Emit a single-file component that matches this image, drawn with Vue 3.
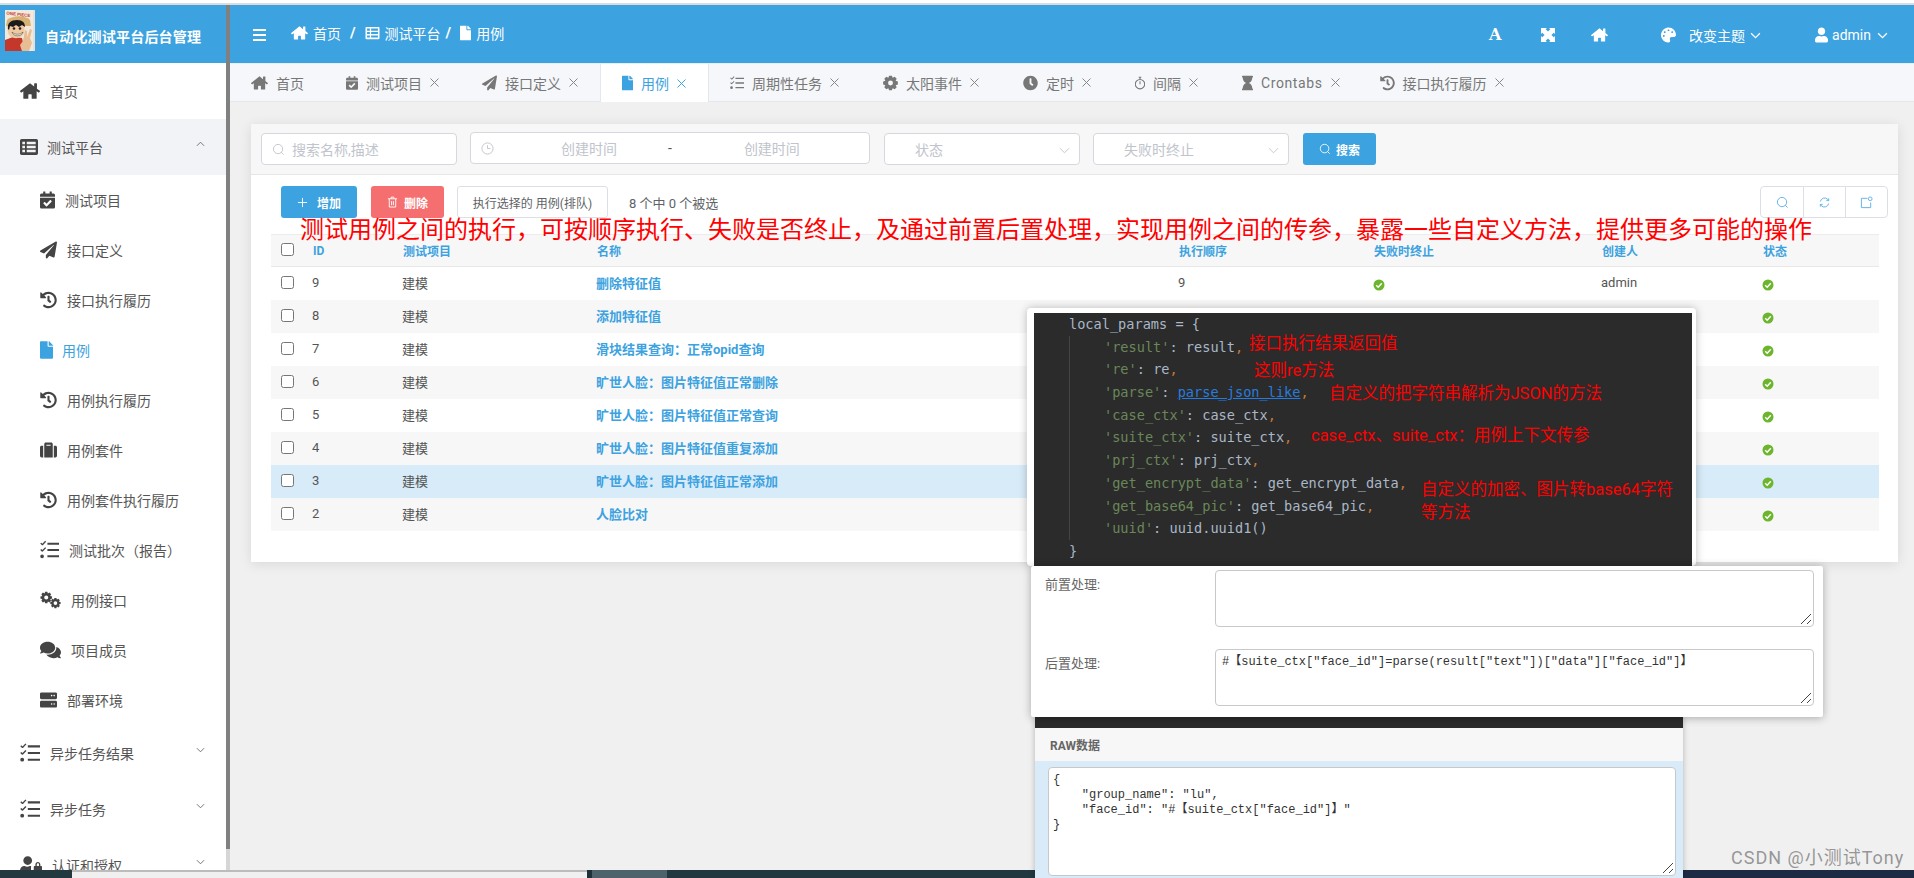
<script setup>
function gear(cx, cy, R, r, hole, n) {
  let d = ''
  const step = (Math.PI * 2) / n
  for (let i = 0; i < n; i++) {
    const a = i * step
    const pts = [
      [r, a - step * 0.5],
      [R, a - step * 0.24],
      [R, a + step * 0.24],
      [r, a + step * 0.5]
    ]
    pts.forEach(([rad, t], k) => {
      d += (i === 0 && k === 0 ? 'M' : 'L') + (cx + rad * Math.cos(t)).toFixed(1) + ' ' + (cy + rad * Math.sin(t)).toFixed(1)
    })
  }
  d += 'Z'
  d += `M${cx - hole} ${cy}a${hole} ${hole} 0 1 0 ${hole * 2} 0a${hole} ${hole} 0 1 0 ${-hole * 2} 0Z`
  return d
}

const icons = {
  home: { v: '0 0 576 512', d: 'M288 30L408 126V44a12 12 0 0 1 12-12h56a12 12 0 0 1 12 12V190L571 252c5 4 6 12 2 17l-26 31c-4 5-12 6-17 2L480 262V464a16 16 0 0 1-16 16H352a16 16 0 0 1-16-16V368a16 16 0 0 0-16-16h-64a16 16 0 0 0-16 16v96a16 16 0 0 1-16 16H112a16 16 0 0 1-16-16V262L46 302c-5 4-13 3-17-2L3 269c-4-5-3-13 2-17Z' },
  plane: { v: '0 0 512 512', d: 'M476 3.2L12.5 270.6c-18.1 10.4-15.8 35.6 2.2 43.2L121 358.4l287.3-253.2c5.5-4.9 13.3 2.6 8.6 8.3L176 407v80.5c0 23.6 28.5 32.9 42.5 15.8L282 426l124.6 52.2c14.2 6 30.4-2.9 33-18.2l72-432C515 7.8 493.3-6.8 476 3.2z' },
  file: { v: '0 0 384 512', d: 'M224 136V0H24C10.7 0 0 10.7 0 24v464c0 13.3 10.7 24 24 24h336c13.3 0 24-10.7 24-24V160H248c-13.2 0-24-10.8-24-24zm160-14.1v6.1H256V0h6.1c6.4 0 12.5 2.5 17 7l97.9 98c4.5 4.5 7 10.6 7 16.9z' },
  calendar: { v: '0 0 448 512', d: 'M436 160H12c-6.627 0-12-5.373-12-12v-36c0-26.51 21.49-48 48-48h48V12c0-6.627 5.373-12 12-12h40c6.627 0 12 5.373 12 12v52h128V12c0-6.627 5.373-12 12-12h40c6.627 0 12 5.373 12 12v52h48c26.51 0 48 21.49 48 48v36c0 6.627-5.373 12-12 12zM12 192h424c6.627 0 12 5.373 12 12v260c0 26.51-21.49 48-48 48H48c-26.51 0-48-21.49-48-48V204c0-6.627 5.373-12 12-12zm333.296 95.947l-28.169-28.398c-4.667-4.705-12.265-4.736-16.970-.068L194.12 364.665l-45.98-46.352c-4.667-4.705-12.266-4.736-16.971-.068l-28.397 28.17c-4.705 4.667-4.736 12.265-.068 16.970l82.601 83.269c4.667 4.705 12.265 4.736 16.970.068l142.953-141.805c4.705-4.667 4.736-12.265.068-16.970z' },
  history: { v: '0 0 512 512', d: 'M504 255.531c.253 136.64-111.18 248.372-247.82 248.468-59.015.042-113.223-20.53-155.822-54.911-11.077-8.94-11.905-25.541-1.839-35.607l11.267-11.267c8.609-8.609 22.353-9.551 31.891-1.984C173.062 425.135 212.781 440 256 440c101.705 0 184-82.311 184-184 0-101.705-82.311-184-184-184-48.814 0-93.149 18.969-126.068 49.932l50.754 50.754c10.08 10.08 2.941 27.314-11.313 27.314H24c-8.837 0-16-7.163-16-16V38.627c0-14.254 17.234-21.393 27.314-11.314l49.372 49.372C129.209 34.136 189.552 8 256 8c136.81 0 247.747 110.78 248 247.531zm-180.912 78.784l9.823-12.63c8.138-10.463 6.253-25.542-4.21-33.679L288 256.349V152c0-13.255-10.745-24-24-24h-16c-13.255 0-24 10.745-24 24v135.651l65.409 50.874c10.463 8.137 25.541 6.253 33.679-4.21z' },
  clock: { v: '0 0 512 512', d: 'M256,8C119,8,8,119,8,256S119,504,256,504,504,393,504,256,393,8,256,8Zm92.49,313h0l-20,25a16,16,0,0,1-22.49,2.5h0l-67-49.72a40,40,0,0,1-15-31.23V112a16,16,0,0,1,16-16h32a16,16,0,0,1,16,16V256l58,42.5A16,16,0,0,1,348.49,321Z' },
  suitcase: { v: '0 0 512 512', d: 'M128 480h256V80c0-26.5-21.5-48-48-48H176c-26.5 0-48 21.5-48 48v400zm64-384h128v32H192V96zm320 80v256c0 26.5-21.5 48-48 48h-48V128h48c26.5 0 48 21.5 48 48zM96 480H48c-26.5 0-48-21.5-48-48V176c0-26.5 21.5-48 48-48h48v352z' },
  hourglass: { v: '0 0 384 512', d: 'M360 64c13.255 0 24-10.745 24-24V24c0-13.255-10.745-24-24-24H24C10.745 0 0 10.745 0 24v16c0 13.255 10.745 24 24 24 0 90.965 51.016 167.734 120.842 192C75.016 280.266 24 357.035 24 448c-13.255 0-24 10.745-24 24v16c0 13.255 10.745 24 24 24h336c13.255 0 24-10.745 24-24v-16c0-13.255-10.745-24-24-24 0-90.965-51.016-167.734-120.842-192C308.984 231.734 360 154.965 360 64z' },
  user: { v: '0 0 448 512', d: 'M224 256c70.7 0 128-57.3 128-128S294.7 0 224 0 96 57.3 96 128s57.3 128 128 128zm89.6 32h-16.7c-22.2 10.2-46.9 16-72.9 16s-50.6-5.8-72.9-16h-16.7C60.2 288 0 348.2 0 422.4V464c0 26.5 21.5 48 48 48h352c26.5 0 48-21.5 48-48v-41.6c0-74.2-60.2-134.4-134.4-134.4z' },
  userlock: { v: '0 0 640 512', d: 'M224 256c70.7 0 128-57.3 128-128S294.7 0 224 0 96 57.3 96 128s57.3 128 128 128zm96 64c0-10 2-20 6-28-9-2-18-4-28-4h-17c-22 10-47 16-73 16s-51-6-73-16h-17C60 288 0 348 0 422v42c0 26 22 48 48 48h276c-3-6-4-12-4-18V320zM610 288h-18v-48c0-42-34-72-72-72s-72 30-72 72v48h-18c-17 0-30 13-30 30v164c0 17 13 30 30 30h180c17 0 30-13 30-30V318c0-17-13-30-30-30zm-58 0h-64v-48c0-18 14-32 32-32s32 14 32 32z' },
  palette: { v: '0 0 512 512', d: 'M204.3 5C104.9 24.4 24.8 104.3 5.2 203.4c-37 187 131.7 326.4 258.8 306.7 41.2-6.4 61.4-54.6 42.5-91.7-23.1-45.4 9.9-98.4 60.9-98.4h79.7c35.8 0 64.8-29.6 64.9-65.3C511.5 97.1 368.1-26.9 204.3 5zM96 320c-17.7 0-32-14.3-32-32s14.3-32 32-32 32 14.3 32 32-14.3 32-32 32zm32-128c-17.7 0-32-14.3-32-32s14.3-32 32-32 32 14.3 32 32-14.3 32-32 32zm128-64c-17.7 0-32-14.3-32-32s14.3-32 32-32 32 14.3 32 32-14.3 32-32 32zm128 64c-17.7 0-32-14.3-32-32s14.3-32 32-32 32 14.3 32 32-14.3 32-32 32z' },
  comments: { v: '0 0 576 512', d: 'M416 192c0-88.4-93.1-160-208-160S0 103.6 0 192c0 34.3 14.1 65.9 38 92-13.4 30.2-35.5 54.2-35.8 54.5-2.2 2.3-2.8 5.7-1.5 8.7S4.8 352 8 352c36.6 0 66.9-12.3 88.7-25 32.2 15.7 70.3 25 111.3 25 114.9 0 208-71.6 208-160zm122 220c23.9-26 38-57.7 38-92 0-66.9-53.5-124.2-129.3-148.1.9 6.6 1.3 13.3 1.3 20.1 0 105.9-107.7 192-240 192-10.8 0-21.3-.8-31.7-1.9C207.8 439.6 281.8 480 368 480c41 0 79.1-9.2 111.3-25 21.8 12.7 52.1 25 88.7 25 3.2 0 6.1-1.9 7.3-4.8 1.3-2.9.7-6.3-1.5-8.7-.3-.3-22.4-24.2-35.8-54.5z' },
  server: { v: '0 0 512 512', d: 'M40 30h432c22 0 40 18 40 40v120c0 22-18 40-40 40H40c-22 0-40-18-40-40V70c0-22 18-40 40-40zm310 70a24 24 0 1 0 0 48 24 24 0 1 0 0-48zm76 0a24 24 0 1 0 0 48 24 24 0 1 0 0-48zM40 282h432c22 0 40 18 40 40v120c0 22-18 40-40 40H40c-22 0-40-18-40-40V322c0-22 18-40 40-40zm310 70a24 24 0 1 0 0 48 24 24 0 1 0 0-48zm76 0a24 24 0 1 0 0 48 24 24 0 1 0 0-48z' },
  table: { v: '0 0 512 512', d: 'M50 30h412c28 0 50 22 50 50v352c0 28-22 50-50 50H50c-28 0-50-22-50-50V80c0-28 22-50 50-50zM66 110v70h76v-70zm126 0v70h254v-70zM66 222v70h76v-70zm126 0v70h254v-70zM66 334v70h76v-70zm126 0v70h254v-70z' },
  tasks: { v: '0 0 512 512', d: 'M139 10l26 25-88 90-24 5L7 84l25-25 32 30zM200 60h312v52H200zM139 180l26 25-88 90-24 5L7 254l25-25 32 30zM200 230h312v52H200zM200 400h312v52H200zM56 376a50 50 0 1 0 0 100 50 50 0 1 0 0-100z' },
  expand: { v: '0 0 448 448', d: 'M0 0h190l-40 40 74 74 74-74-40-40h190v190l-40-40-74 74 74 74 40-40v190H258l40-40-74-74-74 74 40 40H0V258l40 40 74-74-74-74-40 40z' },
  list: { v: '0 0 448 512', d: 'M30 60h388c17 0 30 13 30 30v332c0 17-13 30-30 30H30c-17 0-30-13-30-30V90c0-17 13-30 30-30zM50 110v70h90v-70zm130 0v70h218v-70zM50 221v70h90v-70zm130 0v70h218v-70zM50 332v70h90v-70zm130 0v70h218v-70z' },
  timer: { v: '0 0 400 512', d: 'M200 92a210 210 0 1 0 0 420 210 210 0 1 0 0-420zm0 44a166 166 0 1 1 0 332 166 166 0 1 1 0-332zM150 10h100v40h-28v50h-44V50h-28zM180 190h40v120h-40z' },
  gear: { v: '0 0 512 512', d: gear(256, 256, 256, 190, 84, 8) },
  cogs: { v: '0 0 640 512', d: gear(190, 180, 180, 130, 62, 8) + gear(470, 350, 160, 116, 56, 8) }
}

const rowsData = [
  { id: 9, name: '删除特征值' },
  { id: 8, name: '添加特征值' },
  { id: 7, name: '滑块结果查询：正常opid查询' },
  { id: 6, name: '旷世人脸：图片特征值正常删除' },
  { id: 5, name: '旷世人脸：图片特征值正常查询' },
  { id: 4, name: '旷世人脸：图片特征值重复添加' },
  { id: 3, name: '旷世人脸：图片特征值正常添加', active: true },
  { id: 2, name: '人脸比对' }
]

const subNav = [
  { icon: 'calendar', w: 15, t: '测试项目' },
  { icon: 'plane', w: 17, t: '接口定义' },
  { icon: 'history', w: 17, t: '接口执行履历' },
  { icon: 'file', w: 13, t: '用例', on: true },
  { icon: 'history', w: 17, t: '用例执行履历' },
  { icon: 'suitcase', w: 17, t: '用例套件' },
  { icon: 'history', w: 17, t: '用例套件执行履历' },
  { icon: 'tasks', w: 19, t: '测试批次（报告）' },
  { icon: 'cogs', w: 21, t: '用例接口' },
  { icon: 'comments', w: 21, t: '项目成员' },
  { icon: 'server', w: 17, t: '部署环境' }
]

const bottomNav = [
  { icon: 'tasks', w: 20, t: '异步任务结果' },
  { icon: 'tasks', w: 20, t: '异步任务' },
  { icon: 'userlock', w: 22, t: '认证和授权' }
]

const tabs = [
  { icon: 'home', w: 17, t: '首页', fixed: true },
  { icon: 'calendar', w: 12, t: '测试项目' },
  { icon: 'plane', w: 15, t: '接口定义' },
  { icon: 'file', w: 11, t: '用例', on: true },
  { icon: 'tasks', w: 14, t: '周期性任务', late: true },
  { icon: 'gear', w: 15, t: '太阳事件', late: true },
  { icon: 'clock', w: 15, t: '定时', late: true },
  { icon: 'timer', w: 10, t: '间隔', late: true },
  { icon: 'hourglass', w: 11, t: 'Crontabs', wide: true },
  { icon: 'history', w: 15, t: '接口执行履历', late: true }
]

const codeLines = [
  { k: "'result'", v: 'result', c: true },
  { k: "'re'", v: 're', c: true },
  { k: "'parse'", v: 'parse_json_like', c: true, link: true },
  { k: "'case_ctx'", v: 'case_ctx', c: true },
  { k: "'suite_ctx'", v: 'suite_ctx', c: true },
  { k: "'prj_ctx'", v: 'prj_ctx', c: true },
  { k: "'get_encrypt_data'", v: 'get_encrypt_data', c: true },
  { k: "'get_base64_pic'", v: 'get_base64_pic', c: true },
  { k: "'uuid'", v: 'uuid.uuid1()', c: false }
]
</script>

<template>
  <div class="page">
    <div class="topline"></div>
    <div class="main">
      <aside class="aside">
        <div class="brand">
          <svg class="logo" viewBox="0 0 30 41">
            <rect width="30" height="41" fill="#f1e9dc" />
            <path d="M2 10c6-5 18-5 23 0l1 6H1z" fill="#d8b274" />
            <text x="1.5" y="6" font-size="4.4" font-weight="700" fill="#c8322b" font-family="Liberation Sans, sans-serif" transform="rotate(6 15 4)">ONE PIECE</text>
            <path d="M0 30l8-3 9 1 3 13H0z" fill="#c4382c" />
            <path d="M4 14c3-3 11-3 14 0 2 3 2 8 0 11-3 4-10 4-13 1-3-3-3-9-1-12z" fill="#f0c9a0" />
            <path d="M3 19c-1-6 3-9 9-9s8 3 8 7l-3-2-3 2-3-2-3 2-3-1-1 4z" fill="#1c1a1c" />
            <path d="M7 22c3 3 8 3 11 0-1 5-10 5-11 0z" fill="#fff" stroke="#333" stroke-width=".5" />
            <circle cx="9" cy="18.5" r="1.3" fill="#222" />
            <circle cx="15" cy="18.5" r="1.3" fill="#222" />
            <path d="M18 31l2-11 2 1 0 6 3-8 2 1-2 8 2 5-3 8h-7l-2-6z" fill="#e9bd93" />
            <path d="M28 0h2v41h-2z" fill="#e4e0db" />
          </svg>
          <span class="brand-text">自动化测试平台后台管理</span>
        </div>
        <nav class="nav">
          <div class="nav-top">
            <svg class="ic" :viewBox="icons.home.v" width="20"><path :d="icons.home.d" /></svg>
            <span>首页</span>
          </div>
          <div class="nav-top open">
            <svg class="ic" :viewBox="icons.table.v" width="18"><path fill-rule="evenodd" :d="icons.table.d" /></svg>
            <span class="tight">测试平台</span>
            <svg class="chev up" viewBox="0 0 10 6"><path d="M1 5l4-4 4 4" /></svg>
          </div>
          <div v-for="n in subNav" :key="n.t" class="nav-sub" :class="{ on: n.on }">
            <svg class="ic" :viewBox="icons[n.icon].v" :width="n.w"><path fill-rule="evenodd" :d="icons[n.icon].d" /></svg>
            <span>{{ n.t }}</span>
          </div>
          <div v-for="n in bottomNav" :key="n.t" class="nav-top">
            <svg class="ic" :viewBox="icons[n.icon].v" :width="n.w"><path fill-rule="evenodd" :d="icons[n.icon].d" /></svg>
            <span>{{ n.t }}</span>
            <svg class="chev" viewBox="0 0 10 6"><path d="M1 1l4 4 4-4" /></svg>
          </div>
        </nav>
      </aside>
      <div class="scroll-track"><div class="scroll-thumb"></div></div>

      <div class="content">
        <header class="head">
          <div class="burger"><i></i><i></i><i></i></div>
          <div class="crumbs">
            <svg class="w-ic" :viewBox="icons.home.v" width="17"><path :d="icons.home.d" /></svg>
            <span>首页</span>
            <b class="sl">/</b>
            <svg class="w-ic" :viewBox="icons.list.v" width="15"><path fill-rule="evenodd" :d="icons.list.d" /></svg>
            <span>测试平台</span>
            <b class="sl sl2">/</b>
            <svg class="w-ic" :viewBox="icons.file.v" width="11"><path :d="icons.file.d" /></svg>
            <span>用例</span>
          </div>
          <div class="head-right">
            <span class="font-a">A</span>
            <svg class="w-ic expand" :viewBox="icons.expand.v" width="14"><path :d="icons.expand.d" /></svg>
            <svg class="w-ic hm" :viewBox="icons.home.v" width="17"><path :d="icons.home.d" /></svg>
            <svg class="w-ic pal" :viewBox="icons.palette.v" width="15"><path fill-rule="evenodd" :d="icons.palette.d" /></svg>
            <span class="theme">改变主题</span>
            <svg class="w-chev" viewBox="0 0 10 6"><path d="M1 1l4 4 4-4" /></svg>
            <svg class="w-ic usr" :viewBox="icons.user.v" width="13"><path :d="icons.user.d" /></svg>
            <span class="admin">admin</span>
            <svg class="w-chev" viewBox="0 0 10 6"><path d="M1 1l4 4 4-4" /></svg>
          </div>
        </header>

        <div class="tabs">
          <div v-for="t in tabs" :key="t.t" class="tab" :class="{ on: t.on, late: t.late, wide: t.wide }">
            <svg class="tab-ic" :viewBox="icons[t.icon].v" :width="t.w"><path fill-rule="evenodd" :d="icons[t.icon].d" /></svg>
            <span>{{ t.t }}</span>
            <svg v-if="!t.fixed" class="x" viewBox="0 0 9 9"><path d="M.5.5l8 8M8.5.5l-8 8" /></svg>
          </div>
        </div>

        <div class="body">
          <section class="card">
            <div class="search">
              <div class="field f1">
                <svg class="s-ic" viewBox="0 0 14 14"><circle cx="6.5" cy="6.5" r="5" /><path d="M10 10l2.5 2.5" /></svg>
                <span class="ph">搜索名称,描述</span>
              </div>
              <div class="field f2">
                <svg class="s-ic" viewBox="0 0 14 14"><circle cx="7" cy="7" r="6" /><path d="M7 3.5V7h3" /></svg>
                <span class="ph date-a">创建时间</span>
                <span class="dash">-</span>
                <span class="ph date-b">创建时间</span>
              </div>
              <div class="field f3">
                <span class="ph">状态</span>
                <svg class="sel" viewBox="0 0 12 7"><path d="M1 1l5 5 5-5" /></svg>
              </div>
              <div class="field f4">
                <span class="ph">失败时终止</span>
                <svg class="sel" viewBox="0 0 12 7"><path d="M1 1l5 5 5-5" /></svg>
              </div>
              <div class="btn-search">
                <svg class="s-w" viewBox="0 0 14 14"><circle cx="6.5" cy="6.5" r="5" /><path d="M10 10l2.5 2.5" /></svg>
                <span>搜索</span>
              </div>
            </div>

            <div class="toolbar">
              <div class="btn add">
                <svg class="plus" viewBox="0 0 12 12"><path d="M6 1v10M1 6h10" /></svg>
                <span>增加</span>
              </div>
              <div class="btn del">
                <svg class="trash" viewBox="0 0 12 13"><path d="M1 3h10M4.5 3V1.2h3V3M2.5 3v9h7V3M5 5.5v4.5M7 5.5v4.5" /></svg>
                <span>删除</span>
              </div>
              <div class="btn exec">执行选择的 用例(排队)</div>
              <span class="selinfo">8 个中 0 个被选</span>
              <div class="tools">
                <div class="tool"><svg viewBox="0 0 14 14"><circle cx="6.5" cy="6.5" r="5" /><path d="M10 10l2.5 2.5" /></svg></div>
                <div class="tool"><svg viewBox="0 0 14 14"><path d="M2.5 6a4.7 4.7 0 0 1 8-2.4L11.5 5M11.5 8a4.7 4.7 0 0 1-8 2.4L2.5 9" /><path d="M11.5 2.5V5H9M2.5 11.500V9H5" /></svg></div>
                <div class="tool"><svg viewBox="0 0 14 14"><path d="M8 2.500H1.500v10h10V7" /><circle cx="11" cy="3" r="2" /></svg></div>
              </div>
            </div>

            <div class="table">
              <div class="tr th">
                <span class="cb"></span>
                <span class="hid">ID</span>
                <span>测试项目</span>
                <span>名称</span>
                <span>执行顺序</span>
                <span>失败时终止</span>
                <span>创建人</span>
                <span>状态</span>
              </div>
              <div v-for="(r, i) in rowsData" :key="r.id" class="tr" :class="{ odd: i % 2 === 1, act: r.active }">
                <span class="cb"></span>
                <span>{{ r.id }}</span>
                <span>建模</span>
                <span class="link">{{ r.name }}</span>
                <span v-if="i === 0">{{ r.id }}</span>
                <svg v-if="i === 0" class="ok" viewBox="0 0 12 12"><circle cx="6" cy="6" r="5.5" /><path d="M3.2 6.2l2 2 3.6-4" /></svg>
                <span v-if="i === 0">admin</span>
                <svg class="ok last" viewBox="0 0 12 12"><circle cx="6" cy="6" r="5.5" /><path d="M3.2 6.2l2 2 3.6-4" /></svg>
              </div>
            </div>
          </section>
        </div>
      </div>
    </div>
    <div class="taskbar">
      <i class="tb-a"></i><i class="tb-b"></i><i class="tb-c"></i><i class="tb-d"></i><i class="tb-e"></i><i class="tb-f"></i>
    </div>

    <div class="big-note">测试用例之间的执行，可按顺序执行、失败是否终止，及通过前置后置处理，实现用例之间的传参，暴露一些自定义方法，提供更多可能的操作</div>

    <div class="code-shot">
      <div class="code">
        <div class="ln"><span class="tx">local_params = {</span></div>
        <div class="block">
          <div v-for="l in codeLines" :key="l.k" class="ln">
            <span class="str">{{ l.k }}</span><span class="tx">: </span><span :class="l.link ? 'lnk' : 'tx'">{{ l.v }}</span><span v-if="l.c" class="cm">,</span>
          </div>
        </div>
        <div class="ln"><span class="tx">}</span></div>
        <span class="red r1">接口执行结果返回值</span>
        <span class="red r2">这则re方法</span>
        <span class="red r3">自定义的把字符串解析为JSON的方法</span>
        <span class="red r4">case_ctx、suite_ctx：用例上下文传参</span>
        <span class="red r5">自定义的加密、图片转base64字符<br />等方法</span>
      </div>
    </div>

    <div class="raw-shot">
      <div class="raw-strip"></div>
      <div class="raw-title">RAW数据</div>
      <div class="raw-body">
        <div class="area raw-area">
          <pre class="mono">{
    "group_name": "lu",
    "face_id": "#【suite_ctx["face_id"]】"
}</pre>
          <svg class="grip" viewBox="0 0 12 12"><path d="M11 1L1 11M11 7l-4 4" /></svg>
        </div>
      </div>
    </div>

    <div class="form-shot">
      <div class="form-row">
        <label>前置处理:</label>
        <div class="area">
          <svg class="grip" viewBox="0 0 12 12"><path d="M11 1L1 11M11 7l-4 4" /></svg>
        </div>
      </div>
      <div class="form-row">
        <label>后置处理:</label>
        <div class="area">
          <pre class="mono">#【suite_ctx["face_id"]=parse(result["text"])["data"]["face_id"]】</pre>
          <svg class="grip" viewBox="0 0 12 12"><path d="M11 1L1 11M11 7l-4 4" /></svg>
        </div>
      </div>
    </div>

    <div class="mark">CSDN @小测试Tony</div>
  </div>
</template>

<style>
html, body { margin: 0; padding: 0; background: #f0f0f0; }
</style>

<style scoped>
.page {
  position: relative;
  width: 1914px;
  height: 878px;
  overflow: hidden;
  display: flex;
  flex-direction: column;
  background: #f0f0f0;
  color: #555;
  font-family: Roboto, "Noto Sans CJK SC", sans-serif;
  font-size: 14px;
}
.topline { height: 2px; border-top: 3px solid #fff; background: #dcdcdc; flex: none; }
.main { flex: 1; display: flex; min-height: 0; }
.aside { width: 226px; flex: none; background: #fff; overflow: hidden; }
.brand { height: 58px; background: #3ca2e0; display: flex; align-items: center; padding-left: 5px; box-sizing: border-box; }
.logo { width: 30px; height: 41px; flex: none; margin-top: -8px; }
.brand-text { color: #fff; font-weight: 700; font-size: 14px; margin-left: 10px; margin-top: 4px; white-space: nowrap; letter-spacing: .2px; }
.ic { flex: none; fill: #444; height: 20px; }
.nav-top { height: 56px; display: flex; align-items: center; padding-left: 20px; gap: 10px; box-sizing: border-box; position: relative; }
.nav-top.open { background: #f2f3f6; gap: 9px; }
.chev { position: absolute; left: 196px; top: 22px; width: 9px; height: 6px; fill: none; stroke: #666; stroke-width: 1; }
.nav-sub { height: 50px; display: flex; align-items: center; padding-left: 40px; gap: 10px; box-sizing: border-box; }
.nav-sub.on { color: #3ca2e0; gap: 9px; }
.nav-sub.on .ic { fill: #3ca2e0; }
.scroll-track { width: 4px; flex: none; background: #d6d6d6; }
.scroll-thumb { height: 844px; background: #808080; }
.content { flex: 1; min-width: 0; display: flex; flex-direction: column; }
.head { height: 58px; flex: none; background: #3ca2e0; display: flex; align-items: center; color: #fff; padding-left: 23px; box-sizing: border-box; }
.burger { width: 13px; display: flex; flex-direction: column; gap: 3px; margin-right: 25px; margin-top: 1px; }
.burger i { display: block; height: 2px; background: #fff; }
.crumbs { display: flex; align-items: center; margin-top: -2px; }
.crumbs svg { margin-right: 5px; }
.sl { margin: 0 9px; font-weight: 700; font-size: 15px; }
.sl2 { margin-left: 5px; }
.w-ic { fill: #fff; height: 16px; flex: none; }
.head-right { margin-left: auto; display: flex; align-items: center; padding-right: 26px; margin-top: 2px; }
.font-a { font-family: "DejaVu Serif", serif; font-weight: 700; font-size: 16px; line-height: 20px; width: 14px; margin-right: 38px; }
.expand { margin-right: 36px; }
.hm { margin-right: 53px; }
.pal { margin-right: 13px; }
.theme { font-size: 14px; margin-right: 5px; }
.w-chev { width: 11px; height: 7px; flex: none; fill: none; stroke: #fff; stroke-width: 1.1; }
.usr { margin-left: 54px; margin-right: 4px; }
.admin { font-size: 14px; margin-right: 6px; }
.tabs { height: 39px; flex: none; display: flex; background: #f5f7fa; border-top: 1px solid #e9eef3; border-bottom: 1px solid #e4e7ed; box-sizing: border-box; color: #777; }
.tab { display: flex; align-items: center; padding: 0 22px 0 21px; gap: 8px; white-space: nowrap; box-sizing: border-box; }
.tab:first-child { padding-right: 21px; }
.tab.late { padding-right: 23px; }
.tab.wide { padding-right: 19px; }
.tab.wide span { letter-spacing: .6px; }
.tab-ic { height: 16px; fill: #777; flex: none; }
.x { width: 9px; height: 9px; fill: none; stroke: #888; stroke-width: 1; }
.tab.on { background: #fff; color: #3ca2e0; border-left: 1px solid #e4e7ed; border-right: 1px solid #e4e7ed; margin-bottom: -1px; }
.tab.on .tab-ic { fill: #3ca2e0; }
.tab.on .x { stroke: #3ca2e0; }
.body { flex: 1; padding: 22px 16px 0 21px; background: #f0f0f0; min-height: 0; }
.card { height: 438px; background: #fff; box-shadow: 0 2px 12px rgba(0, 0, 0, .1); }
.search { height: 51px; background: #f7f7f7; border-bottom: 1px solid #e6e6e6; box-sizing: border-box; display: flex; align-items: center; padding-left: 10px; }
.field { height: 32px; box-sizing: border-box; border: 1px solid #d5d8de; border-radius: 4px; background: #fff; display: flex; align-items: center; position: relative; margin-right: 13px; color: #c0c4cc; }
.f1 { width: 196px; padding-left: 10px; }
.f2 { width: 400px; padding-left: 10px; margin-top: -2px; margin-right: 14px; }
.f3 { width: 196px; padding-left: 30px; }
.f4 { width: 196px; padding-left: 30px; margin-right: 14px; }
.s-ic { width: 13px; height: 13px; fill: none; stroke: #c0c4cc; stroke-width: 1; flex: none; margin-right: 7px; }
.ph { color: #c0c4cc; white-space: nowrap; }
.date-a { margin-left: 60px; }
.dash { color: #555; margin-left: 51px; }
.date-b { margin-left: 72px; }
.sel { position: absolute; right: 9px; top: 13px; width: 11px; height: 7px; fill: none; stroke: #c0c4cc; stroke-width: 1; }
.btn-search { width: 73px; height: 32px; background: #3ca2e0; border-radius: 3px; display: flex; align-items: center; justify-content: center; gap: 5px; color: #fff; font-size: 12px; font-weight: 700; }
.s-w { width: 12px; height: 12px; fill: none; stroke: #fff; stroke-width: 1; }
.toolbar { display: flex; align-items: center; height: 32px; margin-top: 11px; padding: 0 10px 0 30px; }
.btn { height: 32px; border-radius: 3px; display: flex; align-items: center; justify-content: center; box-sizing: border-box; font-size: 12px; }
.add { width: 76px; background: #3ca2e0; color: #fff; gap: 9px; font-weight: 700; margin-right: 14px; }
.plus { width: 11px; height: 11px; fill: none; stroke: #fff; stroke-width: 1; }
.del { width: 73px; background: #f56f70; color: #fff; gap: 6px; font-weight: 700; margin-right: 13px; }
.trash { width: 11px; height: 12px; fill: none; stroke: #fff; stroke-width: 1; }
.exec { width: 151px; background: #fff; border: 1px solid #dcdfe6; color: #606266; }
.selinfo { margin-left: 21px; font-size: 13px; color: #606266; }
.tools { margin-left: auto; display: flex; border: 1px solid #dcdfe6; border-radius: 4px; height: 32px; box-sizing: border-box; }
.tool { width: 42px; box-sizing: border-box; display: flex; align-items: center; justify-content: center; }
.tool + .tool { border-left: 1px solid #dcdfe6; }
.tool svg { width: 13px; height: 13px; fill: none; stroke: #5db0e6; stroke-width: 1; }
.table { margin: 16px 19px 0 20px; font-size: 13px; color: #555; }
.tr { height: 33px; display: grid; grid-template-columns: 41px 90px 194px 582px 195px 228px 161px 117px; align-items: center; }
.tr > span:not(.cb) { margin-top: -2px; }
.tr.th { background: #f7f7f7; border-top: 1px solid #ececec; border-bottom: 1px solid #e8e8e8; box-sizing: border-box; color: #3ca2e0; font-size: 12px; font-weight: 700; }
.tr.th > span:not(.cb) { margin-left: 1px; margin-top: 0; }
.tr.th > .hid { margin-left: 2px; }
.tr.odd { background: #f7f7f7; }
.tr.act { background: #d8ebf9; }
.cb { width: 13px; height: 13px; border: 1px solid #767676; border-radius: 2.5px; box-sizing: border-box; background: #fff; margin-left: 10px; margin-top: -2px; }
.link { color: #3ca2e0; font-weight: 700; }
.ok { width: 12px; height: 12px; margin-top: 2px; }
.ok.last { grid-column: 8; }
.ok circle { fill: #6cb52d; }
.ok path { fill: none; stroke: #fff; stroke-width: 1.5; }
.taskbar { height: 8px; flex: none; display: flex; }
.taskbar i { display: block; height: 100%; }
.tb-a { width: 72px; background: #22393f; }
.tb-b { width: 515px; background: #f0f0f0; border-top: 2px solid #bcbcbc; box-sizing: border-box; }
.tb-c { width: 5px; background: #1d3138; }
.tb-d { width: 75px; background: #4d626a; }
.tb-e { width: 1016px; background: #213841; }
.tb-f { flex: 1; background: #1c2a44; }
.big-note { position: absolute; left: 300px; top: 214px; font-size: 24px; line-height: 32px; color: #f00; white-space: nowrap; }
.code-shot { position: absolute; left: 1027px; top: 308px; width: 669px; height: 258px; background: #fff; border-radius: 4px; padding: 5px 4px 0 7px; box-sizing: border-box; box-shadow: 0 0 8px rgba(0, 0, 0, .25); }
.code { position: relative; height: 100%; background: #2b2b2b; padding-left: 35px; box-sizing: border-box; font-family: "DejaVu Sans Mono", monospace; font-size: 13.6px; }
.ln { height: 22.7px; line-height: 22.7px; white-space: pre; }
.block { border-left: 1px solid #444; padding-left: 34px; }
.tx { color: #a9b7c6; }
.str { color: #6a8759; }
.cm { color: #cc7832; }
.lnk { color: #287bde; text-decoration: underline; }
.red { position: absolute; color: #f00; font-family: Roboto, "Noto Sans CJK SC", sans-serif; font-size: 16.5px; line-height: 23px; white-space: nowrap; }
.r1 { left: 215px; top: 19px; }
.r2 { left: 220px; top: 46px; }
.r3 { left: 295px; top: 69px; }
.r4 { left: 277px; top: 111px; }
.r5 { left: 387px; top: 165px; }
.form-shot { position: absolute; left: 1031px; top: 566px; width: 792px; height: 151px; background: #fff; box-shadow: 0 1px 8px rgba(0, 0, 0, .3); border-radius: 2px; box-sizing: border-box; padding-top: 4px; display: flex; flex-direction: column; gap: 22px; }
.form-row { display: flex; padding-left: 14px; }
.form-row label { width: 170px; flex: none; color: #666; font-size: 13px; line-height: 30px; }
.area { position: relative; height: 57px; flex: 1; margin-right: 9px; border: 1px solid #c8c8c8; border-radius: 4px; box-sizing: border-box; background: #fff; padding: 5px 6px; }
.mono { margin: 0; font-family: "Liberation Mono", "Noto Sans CJK SC", monospace; font-size: 12px; line-height: 15px; color: #333; }
.grip { position: absolute; right: 1px; bottom: 1px; width: 12px; height: 12px; fill: none; stroke: #444; stroke-width: 1; }
.raw-shot { position: absolute; left: 1035px; top: 717px; width: 648px; height: 161px; box-shadow: 0 0 6px rgba(0, 0, 0, .25); display: flex; flex-direction: column; }
.raw-strip { height: 11px; background: #2b2b2b; flex: none; }
.raw-title { height: 33px; flex: none; background: #f7f7f7; color: #666; font-size: 12px; font-weight: 700; line-height: 36px; padding-left: 15px; box-sizing: border-box; }
.raw-body { flex: 1; background: #d9ebf9; padding: 6px 7px 2px 13px; box-sizing: border-box; display: flex; }
.raw-area { height: auto; margin: 0; padding: 5px 4px; }
.mark { position: absolute; left: 1731px; top: 847px; color: rgba(110, 110, 110, .7); font-size: 18px; letter-spacing: 1px; line-height: 22px; white-space: nowrap; }
</style>
